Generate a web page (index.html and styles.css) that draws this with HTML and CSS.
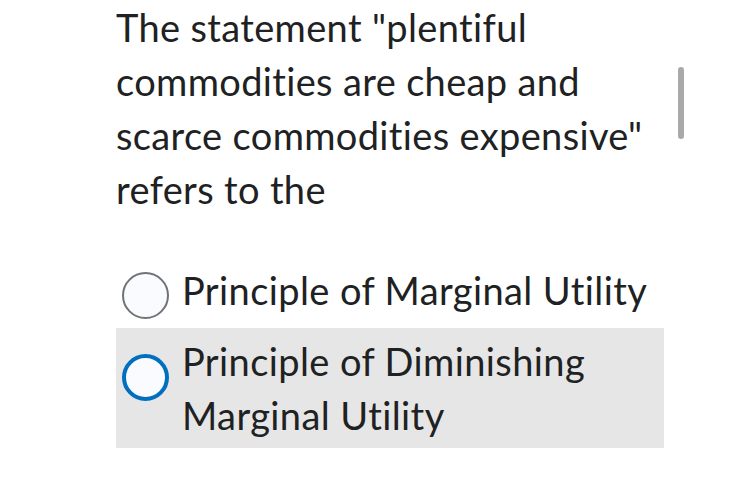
FILE: index.html
```html
<!DOCTYPE html>
<html>
<head>
<meta charset="utf-8">
<link rel="stylesheet" href="styles.css">
</head>
<body>
<div class="page">
  <div class="content">
    <p class="question">The statement "plentiful commodities are cheap and scarce commodities expensive" refers to the</p>
    <div class="options">
      <label class="option first">
        <span class="radio"></span>
        <span class="label">Principle of Marginal Utility</span>
      </label>
      <label class="option hover">
        <span class="radio focus"></span>
        <span class="label">Principle of Diminishing Marginal Utility</span>
      </label>
    </div>
  </div>
  <div class="scrollbar"></div>
</div>
</body>
</html>
```
FILE: styles.css
```css
html, body {
  margin: 0;
  padding: 0;
  background: #ffffff;
}
body {
  font-family: Lato, "Noto Sans", sans-serif;
  font-variant-ligatures: none;
  color: #202122;
  width: 750px;
  height: 498px;
  overflow: hidden;
}
.page {
  position: relative;
  width: 750px;
  height: 498px;
}
.content {
  width: 548px;
  padding-left: 116px;
}
.question {
  margin: 0;
  font-size: 38px;
  line-height: 54px;
  letter-spacing: 0.35px;
  width: 540px;
}
.options {
  margin-top: 41px;
  display: flex;
  flex-direction: column;
}
.option {
  display: flex;
  align-items: flex-start;
  gap: 13px;
  padding: 6px 0 6px 6px;
  font-size: 38px;
  line-height: 54px;
  letter-spacing: 0.4px;
}
.option.first {
  padding-bottom: 9px;
}
.option.hover {
  background: #e6e6e6;
}
.radio {
  flex: none;
  box-sizing: border-box;
  width: 47px;
  height: 47px;
  border-radius: 50%;
  border: 2px solid #6e7377;
  background: #f9fbff;
  margin-top: 9px;
}
.radio.focus {
  border: 4px solid #006fbf;
  margin-top: 20px;
}
.scrollbar {
  position: absolute;
  left: 678px;
  top: 67px;
  width: 6px;
  height: 72px;
  border-radius: 3px;
  background: #a9a9a9;
}
```
